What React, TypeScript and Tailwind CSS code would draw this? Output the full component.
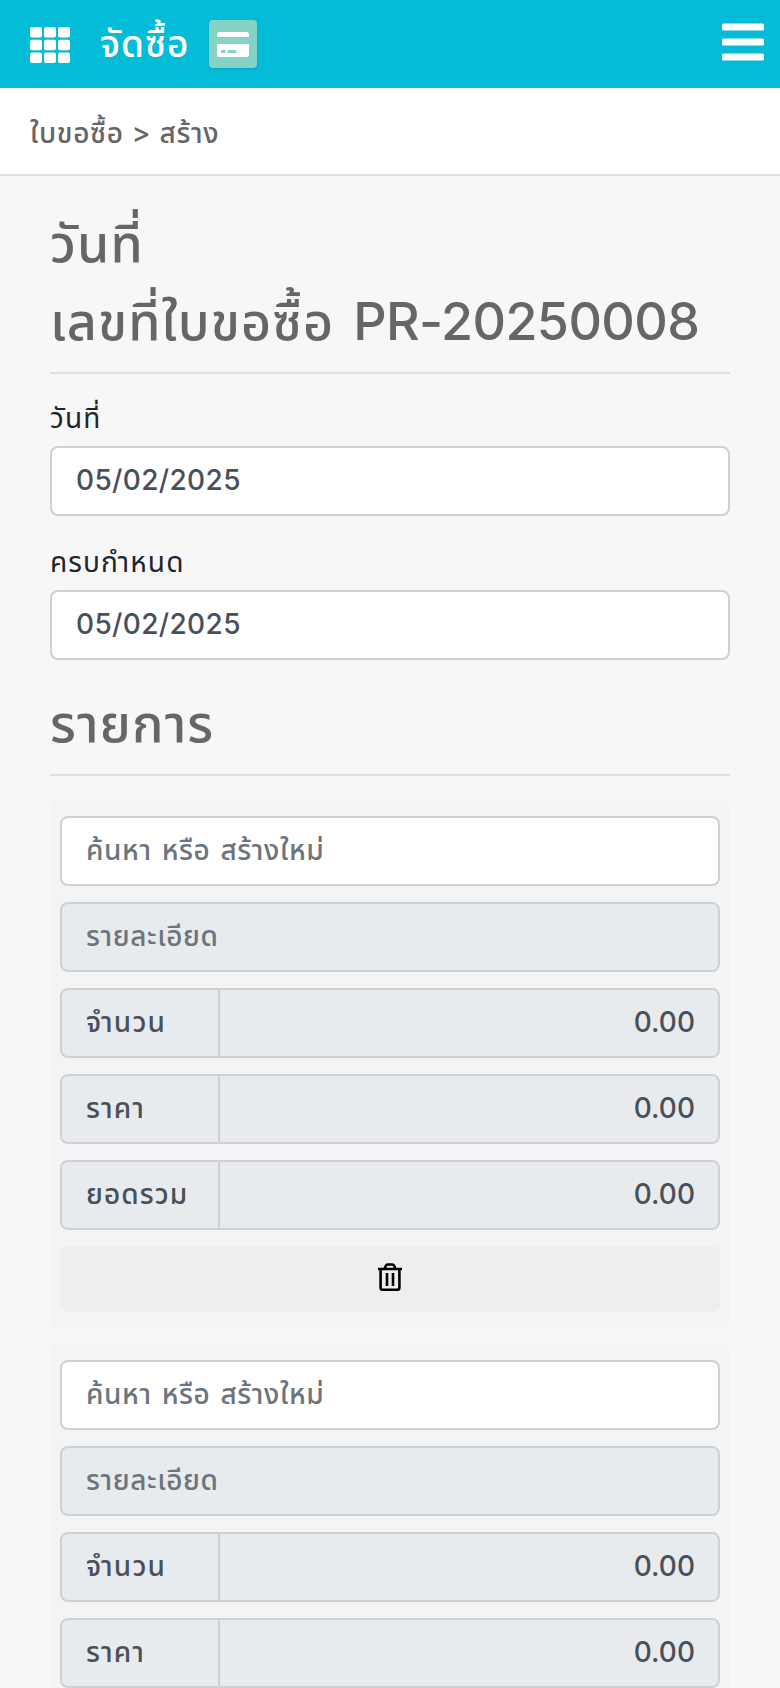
import type { ReactNode } from "react";

const rows = ["จำนวน", "ราคา", "ยอดรวม"];

const fieldCls =
  "flex h-[70px] items-center rounded-lg border-2 border-[#ced0d8] text-[28px] leading-none font-medium";

function GridIcon() {
  return (
    <svg width="40" height="36" viewBox="0 0 40 36" fill="currentColor">
      {[0, 12.75, 25.5].map((y) =>
        [0, 14, 28].map((x) => <rect key={`${x}-${y}`} x={x} y={y} width="12" height="10.5" rx="2" />)
      )}
    </svg>
  );
}

function CardIcon() {
  return (
    <svg width="32" height="25" viewBox="0 0 32 25" fill="currentColor">
      <path d="M0 5V2.5Q0 0 2.5 0h27Q32 0 32 2.5V5z" />
      <path
        fillRule="evenodd"
        d="M0 12h32v10.5q0 2.5-2.5 2.5h-27Q0 25 0 22.5zM4 18v3h4.5v-3zM10.700 18v3h8.600v-3z"
      />
    </svg>
  );
}

function MenuIcon() {
  return (
    <svg width="42" height="38" viewBox="0 0 42 38" fill="currentColor">
      <rect y="0.5" width="42" height="7" rx="1.5" />
      <rect y="15.5" width="42" height="7" rx="1.5" />
      <rect y="30.5" width="42" height="7" rx="1.5" />
    </svg>
  );
}

function TrashIcon() {
  return (
    <svg width="24" height="29" viewBox="0 0 24 29" fill="none" stroke="#000" strokeWidth="2.6">
      <path d="M0 6h24M6.800 6q.6-4.500 3.200-4.500h4q2.600 0 3.200 4.500M2.600 6v18.700q0 2 2 2h14.800q2 0 2-2V6" />
      <path d="M9 10v13M15 10v13" />
    </svg>
  );
}

function Title({ children }: { children: ReactNode }) {
  return (
    <div className="text-[52px] font-medium tracking-[1.1px] whitespace-nowrap text-[#666]">{children}</div>
  );
}

function DateField({ label, value }: { label: string; value: string }) {
  return (
    <div>
      <div className="flex h-14 items-center text-[28px] leading-none tracking-[1.1px] text-[#212529]">{label}</div>
      <div className={`${fieldCls} bg-white px-6 pb-0.5 tracking-[0.35px] text-[#495057]`}>{value}</div>
    </div>
  );
}

function ItemCard() {
  return (
    <div className="flex flex-col gap-4 rounded-lg bg-[#f4f4f4] px-2.5 py-4">
      <div className={`${fieldCls} bg-white px-6 pb-0.5 tracking-[0.6px] text-[#6c757d]`}>
        <span className="[word-spacing:2px]">ค้นหา หรือ สร้างใหม่</span>
      </div>
      <div className={`${fieldCls} bg-[#e8ebee] px-6 pb-0.5 tracking-[0.6px] text-[#6c757d]`}>รายละเอียด</div>
      {rows.map((row) => (
        <div key={row} className={`${fieldCls} bg-[#e8ebee] text-[#495057]`}>
          <div className="flex h-full w-[158px] items-center border-r-2 border-[#ced0d8] pb-0.5 pl-6 tracking-[1.1px]">
            {row}
          </div>
          <div className="flex-1 pr-[23px] pb-0.5 text-right">0.00</div>
        </div>
      ))}
      <button className="flex h-[66px] items-center justify-center rounded-lg bg-[#eee] pb-1">
        <TrashIcon />
      </button>
    </div>
  );
}

export default function App() {
  return (
    <div className="h-[1688px] overflow-hidden bg-[#f7f7f7] font-['Inter','Noto_Sans_Thai','Noto_Sans',sans-serif]">
      <header className="flex h-[88px] items-center bg-[#05bcd8] pr-4 pl-[30px] text-white">
        <div className="pt-0.5">
          <GridIcon />
        </div>
        <div className="ml-[30px] w-[109px] pb-0.5 text-[37px] leading-none font-medium tracking-[1px] whitespace-nowrap">
          จัดซื้อ
        </div>
        <div className="flex size-12 items-center justify-center rounded bg-[#85d2c7] shadow">
          <CardIcon />
        </div>
        <div className="mt-[-4px] ml-auto">
          <MenuIcon />
        </div>
      </header>

      <div className="flex h-[88px] items-center border-b-2 border-[#d8e0e8] bg-white px-[30px] pt-1 text-[28px] font-medium tracking-[0.7px] text-[#666]">
        ใบขอซื้อ &gt; สร้าง
      </div>

      <main className="px-[50px]">
        <div className="flex h-[198px] flex-col border-b-2 border-[#dfdfe0] pt-[29px] leading-[78px]">
          <Title>วันที่</Title>
          <Title>
            เลขที่ใบขอซื้อ <span className="ml-1 tracking-[-0.6px]">PR-20250008</span>
          </Title>
        </div>

        <div className="flex flex-col gap-[18px] pt-4">
          <DateField label="วันที่" value="05/02/2025" />
          <DateField label="ครบกำหนด" value="05/02/2025" />
        </div>

        <div className="mb-6 h-[116px] border-b-2 border-[#dfdfe0] pt-[25px] leading-[78px]">
          <Title>รายการ</Title>
        </div>

        <div className="flex flex-col gap-4">
          <ItemCard />
          <ItemCard />
        </div>
      </main>
    </div>
  );
}
